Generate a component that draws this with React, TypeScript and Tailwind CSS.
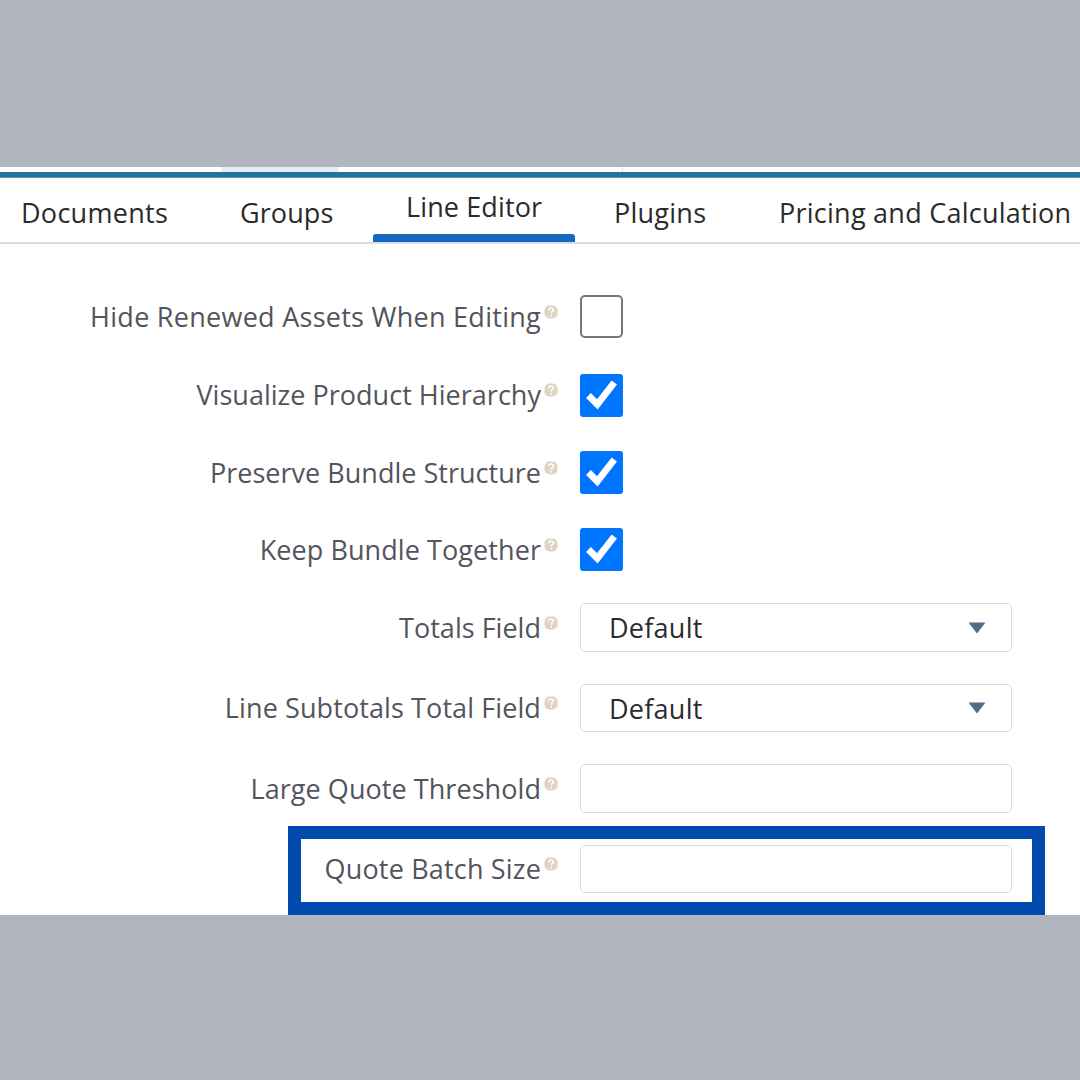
import type { ReactNode } from 'react';
import clsx from 'clsx';

type Field = {
  label: string;
  type: 'checkbox' | 'select' | 'text';
  checked?: boolean;
  row: string;
  tracking: string;
  control?: string;
};

const tabs = [
  { label: 'Documents', cell: 'w-[204px] pl-[21px]', tracking: 'tracking-[0.28px]' },
  { label: 'Groups', cell: 'w-[169px] pl-[36px]', tracking: 'tracking-[0.1px]' },
  { label: 'Line Editor', cell: 'w-[202px] pl-[33px]', tracking: 'tracking-[0.12px]', active: true },
  { label: 'Plugins', cell: 'w-[167px] pl-[39px]', tracking: 'tracking-[0.25px]' },
  { label: 'Pricing and Calculation', cell: 'w-[338px] pl-[37px]', tracking: 'tracking-[0.25px]' },
];

const fields: Field[] = [
  { label: 'Hide Renewed Assets When Editing', type: 'checkbox', row: 'h-[75px]', tracking: 'tracking-[0.27px]' },
  { label: 'Visualize Product Hierarchy', type: 'checkbox', checked: true, row: 'h-[82px]', tracking: 'tracking-[0.02px]' },
  { label: 'Preserve Bundle Structure', type: 'checkbox', checked: true, row: 'h-[73px]', tracking: 'tracking-[0.02px]' },
  { label: 'Keep Bundle Together', type: 'checkbox', checked: true, row: 'h-[81px]', tracking: 'tracking-[0.08px]' },
  { label: 'Totals Field', type: 'select', row: 'h-[75px]', tracking: 'tracking-[0.02px]', control: 'h-[49px]' },
  { label: 'Line Subtotals Total Field', type: 'select', row: 'h-[86px]', tracking: 'tracking-[0.1px]', control: 'h-[48px]' },
  { label: 'Large Quote Threshold', type: 'text', row: 'h-[75px]', tracking: 'tracking-[0.06px]', control: 'h-[49px]' },
];

function HelpIcon() {
  return (
    <svg viewBox="0 0 14 14" className="mt-[7px] ml-[3px] h-[14px] w-[14px] shrink-0 self-start">
      <rect x="0.5" y="0.5" width="13" height="13" rx="5" fill="#ddd4c2" />
      <path d="M4.8 5.2c0-3 4.6-2.8 4.6-.2 0 1.6-2.2 1.6-2.2 3.4" fill="none" stroke="#fffdf6" strokeWidth="1.7" />
      <circle cx="7.2" cy="10.7" r="1" fill="#fffdf6" />
    </svg>
  );
}

function Checkbox({ checked }: { checked?: boolean }) {
  return (
    <div
      className={clsx(
        'h-[43px] w-[43px]',
        checked ? 'rounded-[3px] bg-[#0075ff]' : 'rounded-[5px] border-2 border-[#767676] bg-white'
      )}
    >
      {checked && (
        <svg viewBox="0 0 43 43" className="h-full w-full">
          <path d="M8.5 21.5 17.3 30.3 34.3 8.5" fill="none" stroke="#fff" strokeWidth="6.8" />
        </svg>
      )}
    </div>
  );
}

function Row({ label, tracking, children }: { label: string; tracking: string; children: ReactNode }) {
  return (
    <>
      <div className="flex h-[38px] items-center justify-end pr-[22px]">
        <span className={clsx('whitespace-nowrap text-[27px] leading-[36px] text-[#54545c]', tracking)}>{label}</span>
        <HelpIcon />
      </div>
      {children}
    </>
  );
}

function Control({ field }: { field: Field }) {
  if (field.type === 'checkbox') return <Checkbox checked={field.checked} />;

  return (
    <div
      className={clsx(
        'flex w-[432px] items-center justify-between rounded-[5px] border border-[#d8dbe6] bg-white pr-[25px] pl-[28px]',
        field.control
      )}
    >
      {field.type === 'select' && (
        <>
          <span className="text-[27px] leading-[37px] tracking-[0.25px] text-[#2b2b2b]">Default</span>
          <svg viewBox="0 0 18 12" className="h-3 w-[18px]">
            <path d="M0.5 0.5h17L9 11.5z" fill="#54698d" />
          </svg>
        </>
      )}
    </div>
  );
}

export default function App() {
  return (
    <div className="flex h-[1080px] w-[1080px] flex-col overflow-hidden bg-[#b1b5bd] font-['Open_Sans',sans-serif]">
      <main className="mt-[167px] flex h-[748px] flex-col bg-white">
        {/* Bottom edge of the window above */}
        <div className="flex h-[5px] shrink-0">
          <div className="ml-[221px] w-[118px] bg-[#e3edf7]" />
          <div className="ml-[283px] w-px bg-[#d5dfe8]" />
        </div>
        <div className="h-[6px] shrink-0 border-b border-[#6598b0] bg-[#24749a]" />

        {/* Tabs */}
        <nav className="flex h-[66px] shrink-0 border-b-2 border-[#dddddf]">
          {tabs.map((tab) => (
            <div
              key={tab.label}
              className={clsx(
                'flex shrink-0 flex-col justify-between whitespace-nowrap text-[27px] leading-[38px] text-[#2b2b2b]',
                tab.active ? 'pt-[10px]' : 'pt-[16px]'
              )}
            >
              <span className={clsx(tab.cell, tab.tracking)}>{tab.label}</span>
              {tab.active && <div className="h-2 rounded-t-[3px] bg-[#1468bf]" />}
            </div>
          ))}
        </nav>

        {/* Settings */}
        <div className="flex flex-col pt-[35px]">
          {fields.map((field) => (
            <div key={field.label} className={clsx('grid grid-cols-[580px_1fr] items-center', field.row)}>
              <Row label={field.label} tracking={field.tracking}>
                <Control field={field} />
              </Row>
            </div>
          ))}
          <div className="ml-[288px] grid h-[89px] w-[757px] grid-cols-[279px_1fr] items-center border-[13px] border-[#0049ad] pb-[3px]">
            <Row label="Quote Batch Size" tracking="tracking-[0.18px]">
              <Control field={{ label: 'Quote Batch Size', type: 'text', row: '', tracking: '', control: 'h-[48px]' }} />
            </Row>
          </div>
        </div>
      </main>
    </div>
  );
}
